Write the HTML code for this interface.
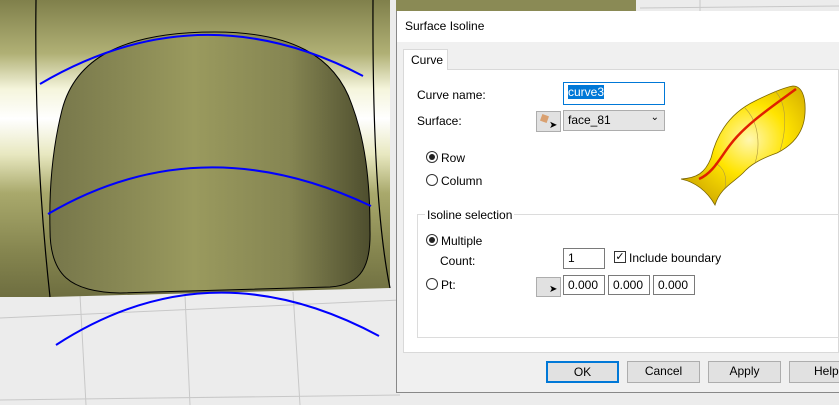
<!DOCTYPE html><html><head><style>
body{margin:0;width:839px;height:405px;overflow:hidden;position:relative;font-family:"Liberation Sans",sans-serif;font-size:12px;color:#000;background:#eee}
.a{position:absolute}
.in{position:absolute;background:#fff;border:1px solid #7a7a7a;box-sizing:border-box;padding:2px 4px;font-size:12px}
.btn{position:absolute;background:#e1e1e1;border:1px solid #adadad;box-sizing:border-box;text-align:center;line-height:19px;font-size:12px;height:22px;top:361px}
.rad{position:absolute;width:12px;height:12px;border:1px solid #333;border-radius:50%;box-sizing:border-box;background:#fff}
.rad.on:after{content:"";position:absolute;left:2px;top:2px;width:6px;height:6px;border-radius:50%;background:#222}
</style></head><body>
<svg class="a" style="left:0;top:0" width="839" height="405">
<defs>
<linearGradient id="cyl" x1="0" y1="0" x2="0" y2="1"><stop offset="0" stop-color="#80804b"/><stop offset=".18" stop-color="#b0b075"/><stop offset=".3" stop-color="#f5f5dc"/><stop offset=".4" stop-color="#ffffff"/><stop offset=".52" stop-color="#e8e8c0"/><stop offset=".65" stop-color="#a9a96c"/><stop offset=".85" stop-color="#85854f"/><stop offset="1" stop-color="#6e6e40"/></linearGradient>
<linearGradient id="dome" x1="0" y1="0" x2="1" y2="0"><stop offset="0" stop-color="#76764a"/><stop offset=".45" stop-color="#9a9a5e"/><stop offset=".75" stop-color="#858552"/><stop offset="1" stop-color="#4e4e2e"/></linearGradient>
<radialGradient id="yl" cx=".55" cy=".45" r=".6"><stop offset="0" stop-color="#fff7b0"/><stop offset=".5" stop-color="#ffe400"/><stop offset="1" stop-color="#d6b000"/></radialGradient>
</defs>
<rect x="0" y="0" width="839" height="405" fill="#ececec"/>
<g stroke="#c8c8c8" fill="none"><path d="M0 318 L400 300"/><path d="M80 295 L86 405"/><path d="M185 295 L190 405"/><path d="M293 292 L300 405"/><path d="M0 400 L400 395"/><path d="M640 8 L839 6"/><path d="M700 0 L700 11"/></g>
<path d="M0 0 H390 V288 L50 297 H0 Z" fill="url(#cyl)"/>
<rect x="396" y="0" width="240" height="11" fill="#8a8a55"/>
<path d="M36 0 Q34 150 50 297" stroke="#000" fill="none" stroke-width="1.2"/>
<path d="M373 0 Q372 200 390 288" stroke="#000" fill="none" stroke-width="1.2"/>
<path d="M215 32 C120 32 75 60 62 110 C52 150 49 190 50 230 C50 275 70 292 120 293 L330 287 C362 285 371 265 370 230 C370 180 365 140 352 105 C335 55 290 32 215 32 Z" fill="url(#dome)" stroke="#000"/>
<g stroke="#0000ff" stroke-width="2" fill="none">
<path d="M40 84 Q200 -10 363 76"/>
<path d="M48 214 Q200 125 371 206"/>
<path d="M56 345 Q210 245 379 336"/>
</g>
</svg>
<div class="a" style="left:396px;top:11px;width:443px;height:381px;background:#f0f0f0;border-left:1px solid #888;border-bottom:1px solid #888"></div>
<div class="a" style="left:397px;top:11px;width:442px;height:31px;background:#fff"></div>
<div class="a" style="left:405px;top:19px;font-size:12px">Surface Isoline</div>
<div class="a" style="left:403px;top:69px;width:436px;height:284px;background:#fff;border:1px solid #d9d9d9;box-sizing:border-box"></div>
<div class="a" style="left:403px;top:49px;width:45px;height:21px;background:#fff;border:1px solid #d9d9d9;border-bottom:none;box-sizing:border-box;padding:3px 0 0 7px">Curve</div>
<div class="a" style="left:417px;top:88px">Curve name:</div>
<div class="in" style="left:563px;top:82px;width:102px;height:23px;border-color:#0078d7"><span style="background:#0078d7;color:#fff">curve3</span></div>
<div class="a" style="left:417px;top:114px">Surface:</div>
<div class="a" style="left:536px;top:111px;width:25px;height:21px;background:#e1e1e1;border:1px solid #adadad;box-sizing:border-box"><div class="a" style="left:4px;top:3px;width:7px;height:7px;background:#d9a070;transform:rotate(20deg)"></div><div class="a" style="left:12px;top:8px;font-size:10px">➤</div></div>
<div class="in" style="left:563px;top:110px;width:102px;height:21px;background:#e5e5e5;border-color:#adadad">face_81<span style="position:absolute;right:5px;top:1px;font-size:10px">⌄</span></div>
<div class="rad on" style="left:426px;top:151px"></div><div class="a" style="left:441px;top:151px">Row</div>
<div class="rad" style="left:426px;top:174px"></div><div class="a" style="left:441px;top:174px">Column</div>
<svg class="a" style="left:675px;top:83px" width="135" height="125">
<path d="M6 96 C22 95 30 90 36 75 C42 50 55 30 80 18 C100 8 112 4 118 3 C126 3 131 12 130 30 C129 50 118 62 102 70 C85 76 75 82 68 90 C58 100 45 105 40 122 C32 108 20 99 6 96 Z" fill="url(#yl)" stroke="#7a6500" stroke-width=".8"/>
<g stroke="#b09a40" stroke-width=".6" fill="none"><path d="M70 25 C85 40 85 65 80 80"/><path d="M100 8 C112 20 112 45 105 68"/><path d="M40 80 C50 85 52 95 50 105"/></g>
<path d="M24 96 C38 90 45 75 55 62 C70 42 95 25 121 6" stroke="#e02000" stroke-width="2.5" fill="none"/></svg>
<div class="a" style="left:417px;top:214px;width:422px;height:124px;border:1px solid #dcdcdc;border-right:none;box-sizing:border-box"></div>
<div class="a" style="left:425px;top:208px;background:#fff;padding:0 2px">Isoline selection</div>
<div class="rad on" style="left:426px;top:234px"></div><div class="a" style="left:441px;top:234px">Multiple</div>
<div class="a" style="left:440px;top:254px">Count:</div>
<div class="in" style="left:563px;top:248px;width:42px;height:21px">1</div>
<div class="a" style="left:614px;top:251px;width:12px;height:12px;border:1px solid #333;box-sizing:border-box;font-size:11px;line-height:10px;text-align:center">✓</div>
<div class="a" style="left:629px;top:251px">Include boundary</div>
<div class="rad" style="left:426px;top:278px"></div><div class="a" style="left:441px;top:278px">Pt:</div>
<div class="a" style="left:536px;top:277px;width:25px;height:20px;background:#e1e1e1;border:1px solid #adadad;box-sizing:border-box"><div class="a" style="left:12px;top:6px;font-size:10px">➤</div></div>
<div class="in" style="left:563px;top:275px;width:42px;height:20px">0.000</div>
<div class="in" style="left:608px;top:275px;width:42px;height:20px">0.000</div>
<div class="in" style="left:653px;top:275px;width:42px;height:20px">0.000</div>
<div class="btn" style="left:546px;width:73px;border:2px solid #0078d7;line-height:18px">OK</div>
<div class="btn" style="left:627px;width:73px">Cancel</div>
<div class="btn" style="left:708px;width:73px">Apply</div>
<div class="btn" style="left:789px;width:60px;text-align:left;padding-left:24px">Help</div>
</body></html>
